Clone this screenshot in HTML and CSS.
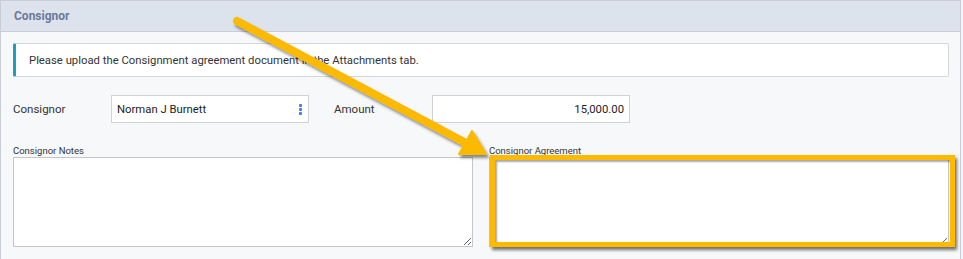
FILE: index.html
```html
<!DOCTYPE html>
<html lang="en">
<head>
    <meta charset="UTF-8">
    <meta name="viewport" content="width=device-width, initial-scale=1.0">
    <title>Consignor</title>
    <link rel="stylesheet" href="styles.css">
</head>
<body>
    <div class="panel">
        <div class="panel-header">Consignor</div>
        <div class="panel-body">
            <div class="notice">Please upload the Consignment agreement document in the Attachments tab.</div>

            <div class="field-row">
                <label class="field-label">Consignor</label>
                <div class="input-box">
                    <span class="input-text">Norman J Burnett</span>
                    <span class="kebab"><i></i><i></i><i></i></span>
                </div>
                <label class="field-label amount-label">Amount</label>
                <div class="input-box amount">
                    <span class="input-text">15,000.00</span>
                </div>
            </div>

            <div class="notes-grid">
                <div class="note-field">
                    <label class="small-label">Consignor Notes</label>
                    <textarea class="note-area"></textarea>
                </div>
                <div class="note-field highlighted">
                    <label class="small-label">Consignor Agreement</label>
                    <textarea class="note-area"></textarea>
                    <div class="highlight-box"></div>
                </div>
            </div>
        </div>
    </div>

    <!-- callout arrow -->
    <svg class="callout" width="963" height="259" viewBox="0 0 963 259">
        <defs>
            <filter id="shadow" x="-10%" y="-10%" width="130%" height="130%">
                <feDropShadow dx="2" dy="3" stdDeviation="1.6" flood-color="#000" flood-opacity="0.45"/>
            </filter>
        </defs>
        <g filter="url(#shadow)" fill="#fbb900" stroke="#fbb900">
            <line x1="237" y1="21" x2="466" y2="143" stroke-width="8" stroke-linecap="round"/>
            <polygon points="486,154 459,154 472,131" stroke-width="2" stroke-linejoin="round"/>
        </g>
    </svg>
</body>
</html>
```

FILE: styles.css
```css
* {
    box-sizing: border-box;
}

body {
    margin: 0;
    background-color: #f3f4f6;
    font-family: Roboto, 'Liberation Sans', Arial, sans-serif;
    color: #333;
}

.panel {
    width: 961px;
    height: 270px;
    border: 1px solid #c8ccd4;
    background-color: #f7f8fa;
}

.panel-header {
    height: 31px;
    padding: 0 13px;
    display: flex;
    align-items: center;
    background-color: #dde3ec;
    border-bottom: 1px solid #c8ccd4;
    color: #6a7a9c;
    font-size: 12px;
    font-weight: bold;
}

.panel-body {
    padding: 11px 12px 0 12px;
}

.notice {
    height: 34px;
    width: 936px;
    display: flex;
    align-items: center;
    padding-left: 13px;
    background-color: #fff;
    border: 1px solid #d3d7dd;
    border-left: 3px solid #17a2b8;
    border-radius: 2px;
    font-size: 11.3px;
    color: #333;
}

.field-row {
    display: flex;
    align-items: center;
    margin-top: 18px;
}

.field-label {
    width: 98px;
    font-size: 11.5px;
    color: #333;
}

.amount-label {
    margin-left: 25px;
}

.input-box {
    width: 198px;
    height: 28px;
    display: flex;
    align-items: center;
    justify-content: space-between;
    padding: 0 5px;
    background-color: #fff;
    border: 1px solid #cfd2d6;
    font-size: 11.3px;
    color: #222;
}

.input-box.amount {
    justify-content: flex-end;
}

.kebab {
    display: flex;
    flex-direction: column;
    gap: 1px;
    margin-right: 1px;
}

.kebab i {
    width: 3px;
    height: 3px;
    background-color: #3d7ee8;
    border-radius: 1px;
}

.notes-grid {
    display: grid;
    grid-template-columns: 460px 460px;
    column-gap: 16px;
    margin-top: 22px;
}

.note-field {
    display: flex;
    flex-direction: column;
    position: relative;
}

.small-label {
    font-size: 9.5px;
    line-height: 12px;
    color: #333;
}

.note-area {
    height: 90px;
    width: 100%;
    margin: 0;
    border: 1px solid #c4c6ca;
    background-color: #fff;
    resize: both;
    font-family: inherit;
}

.highlight-box {
    position: absolute;
    left: 1px;
    right: -6px;
    top: 10px;
    bottom: 0;
    border: 5px solid #ffba00;
    box-shadow: 2px 3px 3px rgba(0, 0, 0, 0.55), inset 2px 2px 2px rgba(0, 0, 0, 0.35);
    pointer-events: none;
}

.callout {
    position: absolute;
    left: 0;
    top: 0;
    pointer-events: none;
}
```
